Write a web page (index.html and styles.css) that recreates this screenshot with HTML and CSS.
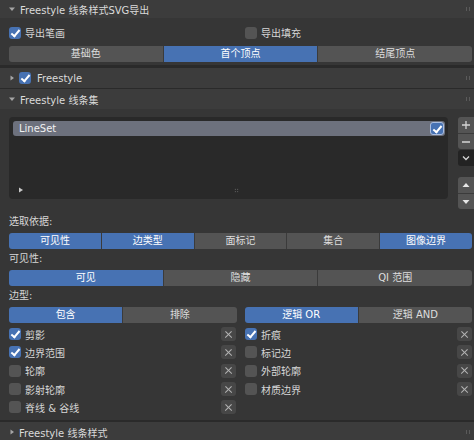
FILE: index.html
```html
<!DOCTYPE html>
<html lang="zh">
<head>
  <meta charset="UTF-8">
  <meta name="viewport" content="width=device-width, initial-scale=1.0">
  <title>Freestyle 线条样式SVG导出</title>
  <link rel="stylesheet" href="styles.css">
</head>
<body>
  <!-- SVG 导出 -->
  <div class="panel panel-export">
    <div class="panel-head">
      <svg class="arrow" viewBox="0 0 6 6"><path d="M0 1.5h6L3 5z"/></svg>
      <span class="title">Freestyle 线条样式SVG导出</span>
      <span class="grip"></span>
    </div>
    <div class="panel-body">
      <div class="two-col">
        <div class="check"><span class="box on"></span>导出笔画</div>
        <div class="check"><span class="box"></span>导出填充</div>
      </div>
      <div class="seg seg-gap">
        <span>基础色</span>
        <span class="on">首个顶点</span>
        <span>结尾顶点</span>
      </div>
    </div>
  </div>

  <div class="panel panel-closed">
    <div class="panel-head tall">
      <svg class="arrow side" viewBox="0 0 6 6"><path d="M1.5 0.5v5L5 3z"/></svg>
      <span class="box on"></span>
      <span class="title head-label">Freestyle</span>
      <span class="grip"></span>
    </div>
  </div>

  <!-- 线条集 -->
  <div class="panel panel-lineset">
    <div class="panel-head tall">
      <svg class="arrow" viewBox="0 0 6 6"><path d="M0 1.5h6L3 5z"/></svg>
      <span class="title">Freestyle 线条集</span>
      <span class="grip"></span>
    </div>
    <div class="panel-body">
      <div class="list-row">
        <div class="list">
          <div class="list-item">
            <span>LineSet</span>
            <span class="box on ring"></span>
          </div>
          <div class="list-foot">
            <svg class="foot-arrow" viewBox="0 0 6 6"><path d="M1 0.5v5L5 3z"/></svg>
            <span class="dots"></span>
            <span></span>
          </div>
        </div>
        <div class="side-tools">
          <div class="tool-group">
            <span class="tool"><svg viewBox="0 0 10 10"><path d="M5 1v8M1 5h8"/></svg></span>
            <span class="tool"><svg viewBox="0 0 10 10"><path d="M1 5h8"/></svg></span>
          </div>
          <span class="tool dark"><svg viewBox="0 0 10 10"><path d="M2 3.5l3 3 3-3"/></svg></span>
          <div class="tool-group move">
            <span class="tool"><svg viewBox="0 0 10 10"><path class="fill" d="M1.5 7h7L5 3z"/></svg></span>
            <span class="tool"><svg viewBox="0 0 10 10"><path class="fill" d="M1.5 3h7L5 7z"/></svg></span>
          </div>
        </div>
      </div>

      <div class="label first">选取依据:</div>
      <div class="seg">
        <span class="on">可见性</span>
        <span class="on">边类型</span>
        <span>面标记</span>
        <span>集合</span>
        <span class="on">图像边界</span>
      </div>

      <div class="label">可见性:</div>
      <div class="seg">
        <span class="on">可见</span>
        <span>隐藏</span>
        <span>QI 范围</span>
      </div>

      <div class="label">边型:</div>
      <div class="two-col seg-pair">
        <div class="seg">
          <span class="on">包含</span>
          <span>排除</span>
        </div>
        <div class="seg">
          <span class="on">逻辑 OR</span>
          <span>逻辑 AND</span>
        </div>
      </div>

      <div class="two-col edges">
        <div class="edge"><span class="box on"></span><span class="name">剪影</span><span class="x"></span></div>
        <div class="edge"><span class="box on"></span><span class="name">折痕</span><span class="x"></span></div>
        <div class="edge"><span class="box on"></span><span class="name">边界范围</span><span class="x"></span></div>
        <div class="edge"><span class="box"></span><span class="name">标记边</span><span class="x"></span></div>
        <div class="edge"><span class="box"></span><span class="name">轮廓</span><span class="x"></span></div>
        <div class="edge"><span class="box"></span><span class="name">外部轮廓</span><span class="x"></span></div>
        <div class="edge"><span class="box"></span><span class="name">影射轮廓</span><span class="x"></span></div>
        <div class="edge"><span class="box"></span><span class="name">材质边界</span><span class="x"></span></div>
        <div class="edge"><span class="box"></span><span class="name">脊线 &amp; 谷线</span><span class="x"></span></div>
      </div>
    </div>
  </div>

  <div class="panel">
    <div class="panel-head tall">
      <svg class="arrow side" viewBox="0 0 6 6"><path d="M1.5 0.5v5L5 3z"/></svg>
      <span class="title">Freestyle 线条样式</span>
      <span class="grip"></span>
    </div>
  </div>
</body>
</html>
```

FILE: styles.css
```css
body {
  margin: 0;
  width: 474px;
  height: 440px;
  overflow: hidden;
  background: #2a2a2a;
  font-family: "DejaVu Sans", "Noto Sans CJK SC", sans-serif;
  font-size: 10px;
  color: #d6d6d6;
}

/* panels */
.panel {
  background: #363636;
}
.panel-export {
  margin-bottom: 3px;
}
.panel-closed {
  margin-bottom: 1px;
}
.panel-lineset {
  margin-bottom: 2px;
}
.panel-head {
  display: flex;
  align-items: center;
  height: 18px;
  padding: 0 3px 0 9px;
  background: #3c3c3c;
  color: #dadada;
}
.panel-head.tall {
  height: 20px;
}
.panel-head .title {
  flex: 1;
}
.panel-head .head-label {
  margin-left: 2px;
}
.arrow {
  width: 6px;
  height: 6px;
  margin-right: 5px;
  fill: #a5a5a5;
}
.arrow.side {
  margin-right: 4px;
}
.grip {
  width: 6px;
  height: 4px;
  background: radial-gradient(circle, #5a5a5a 0.8px, transparent 1px) 0 0 / 3px 2px;
}
.panel-body {
  padding: 6px 2px 3px 9px;
}
.panel-lineset .panel-body {
  padding: 8px 2px 4px 9px;
}

.two-col {
  display: grid;
  grid-template-columns: 1fr 1fr;
  column-gap: 9px;
}

/* checkboxes */
.check {
  display: flex;
  align-items: center;
  height: 17px;
}
.box {
  position: relative;
  flex: none;
  width: 12px;
  height: 12px;
  border-radius: 3px;
  background: #545454;
  margin-right: 4px;
}
.box.on {
  background: #4772b3;
}
.box.on::after {
  content: "";
  position: absolute;
  left: 4px;
  top: 1px;
  width: 3px;
  height: 7px;
  border: solid #fff;
  border-width: 0 2px 2px 0;
  transform: rotate(40deg);
}

/* segmented buttons */
.seg {
  display: flex;
  height: 16px;
  border-radius: 3px;
  overflow: hidden;
}
.seg span {
  flex: 1 1 0;
  text-align: center;
  line-height: 16px;
  background: #545454;
  color: #dedede;
}
.seg span + span {
  border-left: 1px solid #3b3b3b;
}
.seg .on {
  background: #4772b3;
  color: #fff;
}
.seg-gap {
  margin-top: 5px;
}
.seg-pair {
  column-gap: 8px;
}

.label {
  height: 18px;
  line-height: 18px;
  margin-top: 1px;
  margin-bottom: 2px;
}
.label.first {
  margin-top: 4px;
}

/* list */
.list-row {
  display: flex;
  align-items: flex-start;
  gap: 10px;
  margin-right: -2px;
}
.list {
  flex: 1;
  height: 82px;
  display: flex;
  flex-direction: column;
  justify-content: space-between;
  background: #292929;
  border-radius: 4px;
}
.list-item {
  display: flex;
  align-items: center;
  justify-content: space-between;
  height: 15px;
  margin: 4px 3px 0 4px;
  padding-left: 6px;
  border-radius: 3px;
  background: #6d717d;
  color: #f0f0f0;
}
.box.ring {
  width: 14px;
  height: 13px;
  margin-right: 1px;
  box-sizing: border-box;
  border: 1px solid #a9bde0;
}
.box.ring::after {
  left: 4px;
  top: 0.5px;
}
.list-foot {
  display: grid;
  grid-template-columns: 1fr auto 1fr;
  align-items: center;
  height: 8px;
  margin: 0 0 5px 9px;
}
.foot-arrow {
  width: 6px;
  height: 6px;
  fill: #c8c8c8;
}
.dots {
  width: 5px;
  height: 5px;
  margin-left: 6px;
  background: radial-gradient(circle, #808080 0.6px, transparent 0.8px) 0 0 / 2.5px 2.5px;
}

.side-tools {
  width: 16px;
  display: flex;
  flex-direction: column;
}
.tool-group {
  display: flex;
  flex-direction: column;
  border-radius: 3px 0 0 3px;
  overflow: hidden;
}
.tool-group.move {
  margin-top: 11px;
}
.tool {
  display: flex;
  align-items: center;
  justify-content: center;
  height: 16px;
  background: #545454;
}
.tool-group .tool + .tool {
  height: 15px;
  border-top: 1px solid #3b3b3b;
}
.tool.dark {
  margin-top: 1px;
  background: #232323;
  border-radius: 3px 0 0 3px;
}
.tool svg {
  width: 10px;
  height: 10px;
  fill: none;
  stroke: #d4d4d4;
  stroke-width: 1.3;
}
.tool .fill {
  fill: #e6e6e6;
  stroke: none;
}

/* edge types */
.edges {
  margin-top: 2px;
}
.edge {
  display: flex;
  align-items: center;
  height: 18.3px;
}
.edge .name {
  flex: 1;
}
.x {
  position: relative;
  width: 15px;
  height: 14px;
  border-radius: 3px;
  background: #474747;
}
.x::before,
.x::after {
  content: "";
  position: absolute;
  left: 3px;
  top: 6.5px;
  width: 9px;
  height: 1.3px;
  background: #b4b4b4;
  transform: rotate(45deg);
}
.x::after {
  transform: rotate(-45deg);
}
```
